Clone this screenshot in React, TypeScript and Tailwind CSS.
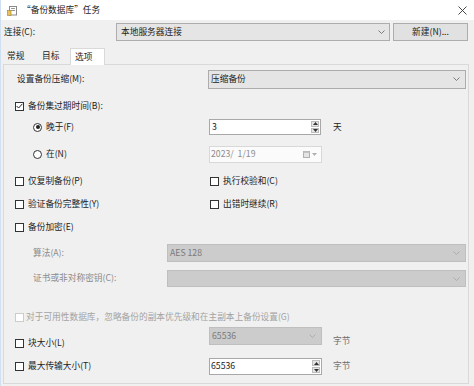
import React from 'react';

function Chevron({ color = '#707070' }: { color?: string }) {
  return (
    <svg width="7" height="4" viewBox="0 0 7 4" className="shrink-0">
      <polyline points="0.5,0.5 3.5,3.5 6.5,0.5" fill="none" stroke={color} strokeWidth="0.9" />
    </svg>
  );
}

function CheckBox({ checked = false, disabled = false }: { checked?: boolean; disabled?: boolean }) {
  return (
    <div
      className={
        disabled
          ? 'w-[9px] h-[9px] border border-[#cccccc] bg-white shrink-0'
          : 'w-[9px] h-[9px] border border-[#333333] bg-white shrink-0 flex items-center justify-center'
      }
    >
      {checked && (
        <svg width="7" height="6" viewBox="0 0 7 6">
          <polyline points="0.6,3 2.6,5 6.4,0.8" fill="none" stroke="#222" strokeWidth="1" />
        </svg>
      )}
    </div>
  );
}

function Radio({ checked = false }: { checked?: boolean }) {
  return (
    <div className="w-[9px] h-[9px] rounded-full border border-[#333333] bg-white shrink-0 flex items-center justify-center">
      {checked && <div className="w-[4px] h-[4px] rounded-full bg-[#222]" />}
    </div>
  );
}

function Spinner() {
  return (
    <div className="flex flex-col gap-px h-full py-px pr-px w-[9px] shrink-0">
      <div className="flex-1 bg-[#e5e5e5] border border-[#bcbcbc] flex items-center justify-center">
        <svg width="5" height="3" viewBox="0 0 5 3">
          <polygon points="0,3 2.5,0 5,3" fill="#333" />
        </svg>
      </div>
      <div className="flex-1 bg-[#e5e5e5] border border-[#bcbcbc] flex items-center justify-center">
        <svg width="5" height="3" viewBox="0 0 5 3">
          <polygon points="0,0 2.5,3 5,0" fill="#333" />
        </svg>
      </div>
    </div>
  );
}

export default function App() {
  return (
    <div className="w-[474px] h-[386px] overflow-hidden bg-[#f0f0f0] border-l border-[#cfe0f2] flex flex-col font-['Noto_Sans_CJK_SC','Noto_Sans',sans-serif] text-[8.7px] leading-none text-[#222222]">
      {/* title bar */}
      <div className="h-[20px] bg-white flex items-center pl-[6px] pr-[7px] shrink-0">
        <svg width="11" height="11" viewBox="0 0 11 11" className="shrink-0">
          <rect x="2.5" y="1.5" width="7" height="8.5" fill="#fff" stroke="#8a8a8a" />
          <rect x="4" y="3" width="4" height="1" fill="#9a9a9a" />
          <rect x="4" y="5" width="4" height="1" fill="#9a9a9a" />
          <rect x="0.5" y="5.5" width="3.5" height="5" fill="#e8c25a" stroke="#a08030" strokeWidth="0.6" />
        </svg>
        <span className="ml-[4px]">“备份数据库”任务</span>
        <div className="flex-1" />
        <svg width="9" height="9" viewBox="0 0 9 9">
          <path d="M0.5 0.5 L8.5 8.5 M8.5 0.5 L0.5 8.5" stroke="#333" strokeWidth="0.9" />
        </svg>
      </div>

      {/* connection row */}
      <div className="mt-[3px] h-[18px] flex items-center pl-[3px] shrink-0">
        <span className="w-[112px]">连接(C):</span>
        <div className="w-[274px] h-full bg-[#e5e5e5] border border-[#adadad] flex items-center pl-[4px] pr-[4px]">
          <span className="flex-1">本地服务器连接</span>
          <Chevron />
        </div>
        <div className="ml-[3px] w-[75px] h-full bg-[#e1e1e1] border border-[#adadad] flex items-center justify-center">
          新建(N)...
        </div>
      </div>

      {/* tabs */}
      <div className="mt-[7px] h-[16px] flex items-end pl-[2px] shrink-0">
        <div className="w-[34px] h-[16px] flex items-center pl-[4px]">常规</div>
        <div className="w-[33px] h-[16px] flex items-center pl-[5px]">目标</div>
        <div className="w-[35px] h-[17px] -mb-px relative z-10 bg-white border border-b-0 border-[#d9d9d9] flex items-center pl-[4px]">
          选项
        </div>
      </div>

      {/* panel */}
      <div className="ml-[2px] w-[466px] h-[320px] border border-[#d9d9d9] bg-[#f0f0f0] pl-[11px] flex flex-col shrink-0">
        {/* compression */}
        <div className="mt-[4px] h-[20px] flex items-center">
          <span className="w-[193px] pl-[2px]">设置备份压缩(M):</span>
          <div className="w-[258px] h-[19px] bg-[#e5e5e5] border border-[#acacac] flex items-center pl-[2px] pr-[5px]">
            <span className="flex-1">压缩备份</span>
            <Chevron />
          </div>
        </div>

        {/* expire */}
        <div className="mt-[8px] h-[18px] flex items-center gap-[4px]">
          <CheckBox checked />
          <span>备份集过期时间(B):</span>
        </div>

        <div className="mt-[4px] h-[16px] flex items-center">
          <div className="w-[194px] pl-[18px] flex items-center gap-[4px]">
            <Radio checked />
            <span>晚于(F)</span>
          </div>
          <div className="w-[112px] h-[16px] bg-white border border-[#a8a8a8] flex items-center pl-[2px]">
            <span className="flex-1">3</span>
            <Spinner />
          </div>
          <span className="ml-[12px]">天</span>
        </div>

        <div className="mt-[11px] h-[17px] flex items-center">
          <div className="w-[194px] pl-[18px] flex items-center gap-[4px]">
            <Radio />
            <span>在(N)</span>
          </div>
          <div className="w-[113px] h-[17px] bg-[#fbfbfb] border border-[#d8d8d8] flex items-center pl-[1px] pr-[4px] text-[#8c8c8c]">
            <span className="flex-1 whitespace-pre">2023/  1/19</span>
            <svg width="7" height="7" viewBox="0 0 7 7" className="mr-[2px]">
              <rect x="0.5" y="0.5" width="6" height="6" fill="#e4e4e4" stroke="#b0b0b0" />
              <rect x="0.5" y="0.5" width="6" height="1.5" fill="#c4c4c4" />
            </svg>
            <svg width="5" height="3" viewBox="0 0 5 3">
              <polygon points="0,0 2.5,3 5,0" fill="#b0b0b0" />
            </svg>
          </div>
        </div>

        {/* options */}
        <div className="mt-[9px] h-[18px] flex items-center">
          <div className="w-[195px] flex items-center gap-[4px]">
            <CheckBox />
            <span>仅复制备份(P)</span>
          </div>
          <div className="flex items-center gap-[4px]">
            <CheckBox />
            <span>执行校验和(C)</span>
          </div>
        </div>

        <div className="mt-[5px] h-[18px] flex items-center">
          <div className="w-[195px] flex items-center gap-[4px]">
            <CheckBox />
            <span>验证备份完整性(Y)</span>
          </div>
          <div className="flex items-center gap-[4px]">
            <CheckBox />
            <span>出错时继续(R)</span>
          </div>
        </div>

        <div className="mt-[5px] h-[18px] flex items-center gap-[4px]">
          <CheckBox />
          <span>备份加密(E)</span>
        </div>

        {/* encryption */}
        <div className="mt-[8px] h-[18px] flex items-center">
          <span className="w-[152px] pl-[18px] text-[#8a8a8a]">算法(A):</span>
          <div className="w-[299px] h-[18px] bg-[#cccccc] border border-[#bfbfbf] flex items-center pl-[2px] pr-[5px] text-[#7a7a7a]">
            <span className="flex-1">AES 128</span>
            <Chevron color="#a8a8a8" />
          </div>
        </div>

        <div className="mt-[8px] h-[17px] flex items-center">
          <span className="w-[152px] pl-[18px] text-[#8a8a8a]">证书或非对称密钥(C):</span>
          <div className="w-[299px] h-[17px] bg-[#cccccc] border border-[#bfbfbf] flex items-center justify-end pr-[5px]">
            <Chevron color="#a8a8a8" />
          </div>
        </div>

        {/* availability */}
        <div className="mt-[21px] h-[18px] flex items-center gap-[2px]">
          <CheckBox disabled />
          <span className="text-[#a3a3a3]">对于可用性数据库，忽略备份的副本优先级和在主副本上备份设置(G)</span>
        </div>

        {/* block size */}
        <div className="mt-[1px] flex items-start">
          <div className="w-[194px] mt-[7px] h-[18px] flex items-center gap-[4px]">
            <CheckBox />
            <span>块大小(L)</span>
          </div>
          <div className="w-[113px] h-[18px] bg-[#cccccc] border border-[#bfbfbf] flex items-center pl-[2px] pr-[5px] text-[#7a7a7a]">
            <span className="flex-1">65536</span>
            <Chevron color="#a8a8a8" />
          </div>
          <span className="ml-[11px] mt-[5px] h-[18px] flex items-center text-[#6e6e6e]">字节</span>
        </div>

        <div className="mt-[6px] h-[17px] flex items-center">
          <div className="w-[194px] flex items-center gap-[4px]">
            <CheckBox />
            <span>最大传输大小(T)</span>
          </div>
          <div className="w-[113px] h-[17px] bg-white border border-[#a8a8a8] flex items-center pl-[1px]">
            <span className="flex-1">65536</span>
            <Spinner />
          </div>
          <span className="ml-[11px] text-[#6e6e6e]">字节</span>
        </div>
      </div>
    </div>
  );
}
